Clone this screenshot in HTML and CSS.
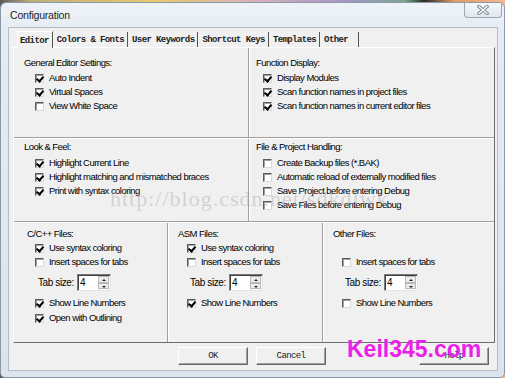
FILE: index.html
```html
<!DOCTYPE html>
<html>
<head>
<meta charset="utf-8">
<title>Configuration</title>
<link rel="stylesheet" href="styles.css">
</head>
<body>
<div class="window">
  <div class="titlebar">
    <span class="title">Configuration</span>
    <span class="close"><svg width="12" height="10" viewBox="0 0 12 10"><path d="M2 1.5L10 8.5M10 1.5L2 8.5" stroke="#7d8897" stroke-width="3.2" stroke-linecap="square"/><path d="M2 1.5L10 8.5M10 1.5L2 8.5" stroke="#fff" stroke-width="1.3" stroke-linecap="square"/></svg></span>
  </div>
  <div class="client">
    <div class="tabs">
      <div class="tab sel">Editor</div>
      <div class="tab">Colors &amp; Fonts</div>
      <div class="tab">User Keywords</div>
      <div class="tab">Shortcut Keys</div>
      <div class="tab">Templates</div>
      <div class="tab last">Other</div>
    </div>
    <div class="panel">
      <div class="row r1">
        <div class="sec w-left p-gen">
          <div class="lbl">General Editor Settings:</div>
          <div class="cb on"><i class="box"></i>Auto Indent</div>
          <div class="cb on"><i class="box"></i>Virtual Spaces</div>
          <div class="cb"><i class="box"></i>View White Space</div>
        </div>
        <div class="sec w-right p-func">
          <div class="lbl">Function Display:</div>
          <div class="cb on"><i class="box"></i>Display Modules</div>
          <div class="cb on"><i class="box"></i>Scan function names in project files</div>
          <div class="cb on"><i class="box"></i>Scan function names in current editor files</div>
        </div>
      </div>
      <div class="row r2">
        <div class="sec w-left p-gen">
          <div class="lbl">Look &amp; Feel:</div>
          <div class="cb on"><i class="box"></i>Highlight Current Line</div>
          <div class="cb on"><i class="box"></i>Highlight matching and mismatched braces</div>
          <div class="cb on"><i class="box"></i>Print with syntax coloring</div>
        </div>
        <div class="sec w-right p-func">
          <div class="lbl">File &amp; Project Handling:</div>
          <div class="cb"><i class="box"></i>Create Backup files (*.BAK)</div>
          <div class="cb"><i class="box"></i>Automatic reload of externally modified files</div>
          <div class="cb"><i class="box"></i>Save Project before entering Debug</div>
          <div class="cb"><i class="box"></i>Save Files before entering Debug</div>
        </div>
      </div>
      <div class="row r3">
        <div class="sec w-c p-c">
          <div class="lbl">C/C++ Files:</div>
          <div class="cb on"><i class="box"></i>Use syntax coloring</div>
          <div class="cb"><i class="box"></i>Insert spaces for tabs</div>
          <div class="tabsize"><span class="tslbl">Tab size:</span><span class="spin"><span class="val">4</span><span class="ud"><b class="up"></b><b class="dn"></b></span></span></div>
          <div class="cb on"><i class="box"></i>Show Line Numbers</div>
          <div class="cb on tight"><i class="box"></i>Open with Outlining</div>
        </div>
        <div class="sec w-asm p-asm">
          <div class="lbl">ASM Files:</div>
          <div class="cb on"><i class="box"></i>Use syntax coloring</div>
          <div class="cb"><i class="box"></i>Insert spaces for tabs</div>
          <div class="tabsize"><span class="tslbl">Tab size:</span><span class="spin"><span class="val">4</span><span class="ud"><b class="up"></b><b class="dn"></b></span></span></div>
          <div class="cb on"><i class="box"></i>Show Line Numbers</div>
        </div>
        <div class="sec w-oth p-asm">
          <div class="lbl">Other Files:</div>
          <div class="cb blank"></div>
          <div class="cb"><i class="box"></i>Insert spaces for tabs</div>
          <div class="tabsize"><span class="tslbl">Tab size:</span><span class="spin"><span class="val">4</span><span class="ud"><b class="up"></b><b class="dn"></b></span></span></div>
          <div class="cb"><i class="box"></i>Show Line Numbers</div>
        </div>
      </div>
    </div>
    <div class="btns">
      <div class="btn">OK</div>
      <div class="btn">Cancel</div>
      <div class="btn help">Help</div>
    </div>
  </div>
</div>
<div class="wm-blog">http://blog.csdn.net/sdkdlwk</div>
<div class="wm-keil">Keil345.com</div>
</body>
</html>
```

FILE: styles.css
```css
html, body {
  margin: 0;
  padding: 0;
}
body {
  width: 505px;
  height: 378px;
  overflow: hidden;
  position: relative;
  background: linear-gradient(90deg, #5a5a5a 0, #bfae7c 6%, #e7c96d 30%, #d7b3ba 50%, #a995c8 68%, #78a98f 80%, #2a2a2a 84%, #e39c66 90%, #f3b892 100%);
  font-family: "Liberation Sans", Arial, sans-serif;
  font-size: 9.5px;
  letter-spacing: -0.55px;
  color: #000;
}
.window {
  box-sizing: border-box;
  height: 376px;
  margin-top: 2px;
  border: 1px solid #8a97a6;
  border-radius: 6px 6px 5px 5px;
  background: linear-gradient(180deg, #eef3f8 0, #e4ebf2 30px, #dbe4ed 100%);
  display: flex;
  flex-direction: column;
  padding: 0 6px 6px 7px;
}
.titlebar {
  height: 24px;
  display: flex;
  align-items: flex-start;
}
.title {
  font-size: 10.5px;
  letter-spacing: -0.2px;
  margin: 6px 0 0 2px;
  color: #1e1e1e;
}
.close {
  margin-left: auto;
  margin-right: -4px;
  width: 38px;
  height: 15px;
  box-sizing: border-box;
  border: 1px solid #9aa6b4;
  border-top: none;
  border-radius: 0 0 4px 4px;
  background: linear-gradient(#f4f7fa, #e2e8ef);
  display: flex;
  align-items: center;
  justify-content: center;
}
.client {
  flex: 1;
  background: #f0f0f0;
  border: 1px solid #b3bdc8;
  padding-top: 3px;
  display: flex;
  flex-direction: column;
}
.tabs {
  display: flex;
  height: 16px;
  margin-left: 8px;
  font-family: "Liberation Mono", "Courier New", monospace;
  font-weight: bold;
  font-size: 9px;
  letter-spacing: -0.6px;
  color: #222;
}
.tab {
  display: flex;
  align-items: center;
  padding: 1px 3px 0 4px;
  border-right: 1px solid #555;
  box-sizing: border-box;
  height: 16px;
  margin-top: 1px;
  height: 15px;
}
.tab.sel {
  margin-top: 0;
  height: 17px;
  border-top: 1px solid #fff;
  border-left: 1px solid #fff;
  padding-left: 2px;
  position: relative;
  z-index: 1;
  background: #f0f0f0;
}
.tab.last {
  padding-right: 10px;
}
.panel {
  margin: 0 2px 0 4px;
  border-top: 1px solid #fff;
  border-left: 1px solid #fff;
  border-right: 1px solid #6e6e6e;
  border-bottom: 1px solid #6e6e6e;
  display: flex;
  flex-direction: column;
}
.row {
  display: flex;
}
.row + .row {
  border-top: 1px solid #fff;
}
.r1 {
  height: 89px;
  border-bottom: 1px solid #a0a0a0;
}
.r2 {
  height: 82px;
  border-bottom: 1px solid #a0a0a0;
}
.r3 {
  height: 119px;
}
.sec {
  box-sizing: border-box;
  display: flex;
  flex-direction: column;
}
.sec + .sec {
  border-left: 1px solid #fff;
}
.w-left {
  width: 235px;
  border-right: 1px solid #a0a0a0;
}
.w-right {
  flex: 1;
}
.w-c {
  width: 154px;
  border-right: 1px solid #a0a0a0;
}
.w-asm {
  width: 155px;
  border-right: 1px solid #a0a0a0;
}
.w-oth {
  flex: 1;
}
.lbl {
  height: 14px;
  line-height: 14px;
  white-space: nowrap;
}
.cb {
  height: 14px;
  line-height: 14px;
  display: flex;
  align-items: center;
  white-space: nowrap;
}
.box {
  box-sizing: border-box;
  width: 9px;
  height: 9px;
  flex: none;
  margin-right: 5px;
  background: #fff;
  border-top: 1px solid #5a5a5a;
  border-left: 1px solid #5a5a5a;
  border-right: 1px solid #d8d8d8;
  border-bottom: 1px solid #d8d8d8;
  box-shadow: inset 1px 1px 0 #a0a0a0;
  position: relative;
}
.cb.on .box::after {
  content: "";
  position: absolute;
  left: 1px;
  top: 0px;
  width: 3px;
  height: 5px;
  border-right: 2px solid #000;
  border-bottom: 2px solid #000;
  transform: rotate(40deg);
  transform-origin: 60% 60%;
}
.r1 .sec {
  padding-top: 8px;
}
.r1 .cb:first-of-type, .r1 .lbl + .cb {
  margin-top: 1px;
}
.r2 .sec {
  padding-top: 1px;
}
.r2 .lbl + .cb {
  margin-top: 2px;
}
.r3 .sec {
  padding-top: 4px;
}
.p-gen {
  padding-left: 10px;
}
.p-gen .cb {
  margin-left: 11px;
}
.p-func {
  padding-left: 6px;
}
.p-func .cb {
  margin-left: 7px;
}
.p-c {
  padding-left: 13px;
}
.p-c .cb {
  margin-left: 8px;
}
.p-c .tabsize {
  margin-left: 11px;
}
.p-asm {
  padding-left: 9px;
}
.p-asm .cb {
  margin-left: 9px;
}
.p-asm .tabsize {
  margin-left: 12px;
}
.tabsize {
  display: flex;
  align-items: center;
  height: 17px;
  margin-top: 5px;
  margin-bottom: 5px;
}
.tslbl {
  width: 39px;
  font-size: 10px;
  letter-spacing: -0.4px;
}
.spin {
  box-sizing: border-box;
  width: 34px;
  height: 17px;
  background: #fff;
  border-top: 1px solid #7a7a7a;
  border-left: 1px solid #7a7a7a;
  border-right: 1px solid #e3e3e3;
  border-bottom: 1px solid #e3e3e3;
  box-shadow: inset 1px 1px 0 #404040;
  display: flex;
  justify-content: space-between;
  padding: 1px 1px 1px 2px;
}
.val {
  font-size: 10px;
  line-height: 13px;
}
.ud {
  width: 11px;
  display: flex;
  flex-direction: column;
}
.up, .dn {
  flex: 1;
  background: #ececec;
  border: 1px solid #b8b8b8;
  box-sizing: border-box;
  position: relative;
}
.up::after, .dn::after {
  content: "";
  position: absolute;
  left: 3px;
  top: 2px;
  border-left: 2px solid transparent;
  border-right: 2px solid transparent;
}
.up::after {
  border-bottom: 2px solid #222;
}
.dn::after {
  border-top: 2px solid #222;
}
.cb.tight {
  margin-top: 1px;
}
.btns {
  display: flex;
  padding-left: 169px;
  margin-top: 4px;
}
.btn {
  box-sizing: border-box;
  width: 72px;
  height: 18px;
  margin-right: 8px;
  border-top: 1px solid #fff;
  border-left: 1px solid #fff;
  border-right: 1px solid #696969;
  border-bottom: 1px solid #696969;
  box-shadow: inset -1px -1px 0 #a0a0a0;
  display: flex;
  align-items: center;
  justify-content: center;
  font-family: "Liberation Mono", "Courier New", monospace;
  font-size: 9px;
  letter-spacing: -0.6px;
  color: #222;
}
.btn.help {
  margin-left: 85px;
}
.wm-blog {
  position: absolute;
  left: 110px;
  top: 186px;
  font-family: "Liberation Serif", "Times New Roman", serif;
  font-size: 22px;
  letter-spacing: 1px;
  color: rgba(150, 150, 150, 0.35);
  white-space: nowrap;
}
.wm-keil {
  position: absolute;
  left: 347px;
  top: 336px;
  font-family: "Liberation Sans", Arial, sans-serif;
  font-weight: bold;
  font-size: 23px;
  letter-spacing: 0;
  color: #ea1fe8;
}
```
